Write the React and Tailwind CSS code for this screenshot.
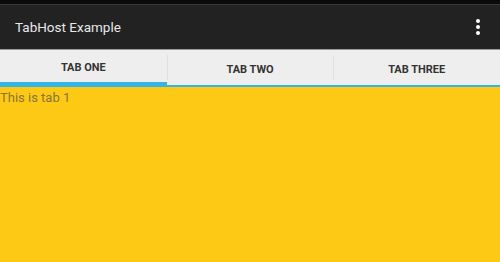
export default function App() {
  const tabs = ["TAB ONE", "TAB TWO", "TAB THREE"];
  return (
    <div className="w-[500px] h-[262px] flex flex-col overflow-hidden bg-[#fec915]" style={{ fontFamily: "Roboto, 'Noto Sans', sans-serif" }}>
      <div className="h-[4px] bg-[#0a0a0a]" />
      <div className="h-[1px] bg-[#3a3a3a]" />
      <div className="h-[44px] bg-[#222222] flex items-center justify-between pl-[15px] pr-[20px]">
        <span className="text-[13.5px] text-[#e8e8e8] leading-none mt-[1px]">TabHost Example</span>
        <div className="flex flex-col gap-[2px]">
          <div className="w-[4px] h-[4px] rounded-full bg-white" />
          <div className="w-[4px] h-[4px] rounded-full bg-white" />
          <div className="w-[4px] h-[4px] rounded-full bg-white" />
        </div>
      </div>
      <div className="h-[1px] bg-[#9a9a9a]" />
      <div className="h-[37px] bg-[#eeeeee] flex">
        {tabs.map((t, i) => (
          <div key={t} className="flex-1 flex flex-col relative">
            <div className="flex-1 flex items-center justify-center pt-[3px] text-[11px] font-bold text-[#333333] leading-none">{t}</div>
            {i > 0 && <div className="absolute left-0 top-[5px] bottom-[7px] w-[1px] bg-[#e0e0e0]" />}
            {i === 0 ? (
              <div className="h-[5px] bg-[#33b5e5]" />
            ) : (
              <div className="h-[2px] bg-[#33b5e5]" />
            )}
          </div>
        ))}
      </div>
      <div className="flex-1 bg-[#fec915]">
        <div className="text-[13px] text-[#86763a] leading-[20px] mt-[1px]">This is tab 1</div>
      </div>
    </div>
  );
}
